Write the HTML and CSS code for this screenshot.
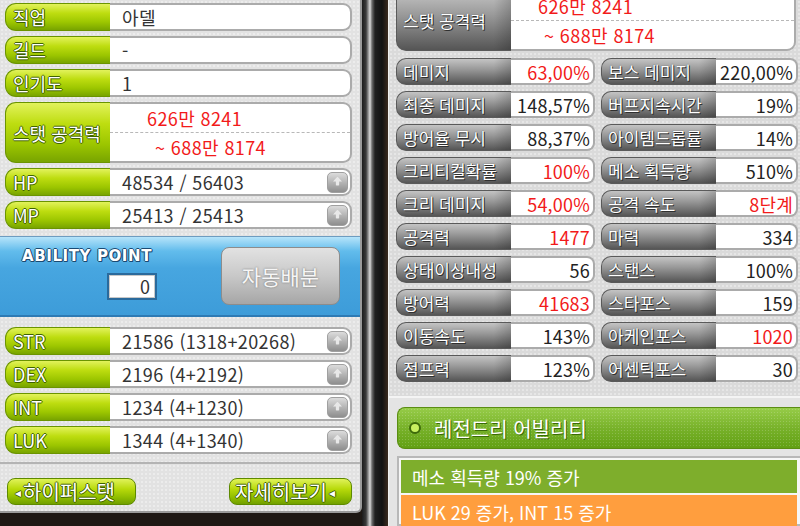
FILE: index.html
```html
<!DOCTYPE html>
<html lang="ko">
<head>
    <meta charset="UTF-8">
    <meta name="viewport" content="width=device-width, initial-scale=1.0">
    <title>캐릭터 스탯</title>
    <link rel="stylesheet" href="styles.css">
</head>
<body>
    <div class="window">
        <!-- basic stat panel -->
        <div class="left-panel">
            <div class="rows top-rows">
                <div class="row"><div class="label">직업</div><div class="value">아델</div></div>
                <div class="row"><div class="label">길드</div><div class="value">-</div></div>
                <div class="row"><div class="label">인기도</div><div class="value">1</div></div>
                <div class="row tall">
                    <div class="label">스탯 공격력</div>
                    <div class="value atk">
                        <span class="atk-line first">626만 8241</span>
                        <span class="atk-line second">~ 688만 8174</span>
                    </div>
                </div>
                <div class="row"><div class="label">HP</div><div class="value">48534 / 56403<span class="up"></span></div></div>
                <div class="row"><div class="label">MP</div><div class="value">25413 / 25413<span class="up"></span></div></div>
            </div>

            <div class="ability">
                <div class="ability-left">
                    <div class="ability-title">ABILITY POINT</div>
                    <div class="ability-input">0</div>
                </div>
                <div class="auto-btn">자동배분</div>
            </div>

            <div class="rows stat-rows">
                <div class="row"><div class="label">STR</div><div class="value">21586 (1318+20268)<span class="up"></span></div></div>
                <div class="row"><div class="label">DEX</div><div class="value">2196 (4+2192)<span class="up"></span></div></div>
                <div class="row"><div class="label">INT</div><div class="value">1234 (4+1230)<span class="up"></span></div></div>
                <div class="row"><div class="label">LUK</div><div class="value">1344 (4+1340)<span class="up"></span></div></div>
            </div>

            <div class="footer">
                <div class="green-btn"><span class="arrow">◂</span>하이퍼스탯</div>
                <div class="green-btn">자세히보기<span class="arrow">◂</span></div>
            </div>
        </div>

        <div class="strip"></div>

        <!-- detail stat panel -->
        <div class="right-panel">
            <div class="detail">
                <div class="row tall atk-row">
                    <div class="glabel">스탯 공격력</div>
                    <div class="value atk">
                        <span class="atk-line first">626만 8241</span>
                        <span class="atk-line second">~ 688만 8174</span>
                    </div>
                </div>
                <div class="grid">
                    <div class="cell"><div class="glabel">데미지</div><div class="num red">63,00%</div></div>
                    <div class="cell"><div class="glabel">보스 데미지</div><div class="num">220,00%</div></div>
                    <div class="cell"><div class="glabel">최종 데미지</div><div class="num">148,57%</div></div>
                    <div class="cell"><div class="glabel">버프지속시간</div><div class="num">19%</div></div>
                    <div class="cell"><div class="glabel">방어율 무시</div><div class="num">88,37%</div></div>
                    <div class="cell"><div class="glabel">아이템드롭률</div><div class="num">14%</div></div>
                    <div class="cell"><div class="glabel">크리티컬확률</div><div class="num red">100%</div></div>
                    <div class="cell"><div class="glabel">메소 획득량</div><div class="num">510%</div></div>
                    <div class="cell"><div class="glabel">크리 데미지</div><div class="num red">54,00%</div></div>
                    <div class="cell"><div class="glabel">공격 속도</div><div class="num red">8단계</div></div>
                    <div class="cell"><div class="glabel">공격력</div><div class="num red">1477</div></div>
                    <div class="cell"><div class="glabel">마력</div><div class="num">334</div></div>
                    <div class="cell"><div class="glabel">상태이상내성</div><div class="num">56</div></div>
                    <div class="cell"><div class="glabel">스탠스</div><div class="num">100%</div></div>
                    <div class="cell"><div class="glabel">방어력</div><div class="num red">41683</div></div>
                    <div class="cell"><div class="glabel">스타포스</div><div class="num">159</div></div>
                    <div class="cell"><div class="glabel">이동속도</div><div class="num">143%</div></div>
                    <div class="cell"><div class="glabel">아케인포스</div><div class="num red">1020</div></div>
                    <div class="cell"><div class="glabel">점프력</div><div class="num">123%</div></div>
                    <div class="cell"><div class="glabel">어센틱포스</div><div class="num">30</div></div>
                </div>
            </div>

            <div class="legend">
                <div class="legend-head"><span class="bullet"></span>레전드리 어빌리티</div>
                <div class="legend-list">
                    <div class="legend-item legendary">메소 획득량 19% 증가</div>
                    <div class="legend-item unique">LUK 29 증가, INT 15 증가</div>
                </div>
            </div>
        </div>
    </div>
</body>
</html>
```

FILE: styles.css
```css
body {
    margin: 0;
    width: 800px;
    height: 526px;
    overflow: hidden;
    background: #1e1814;
    font-family: "Noto Sans CJK KR", "Noto Sans", sans-serif;
}
.window {
    display: flex;
    height: 526px;
}

/* ---------- left panel ---------- */
.left-panel {
    width: 362px;
    height: 513px;
    flex: none;
    box-sizing: border-box;
    background-color: #e2e2e2;
    background-image: radial-gradient(#ececec 1px, transparent 1px);
    background-size: 4px 4px;
    border-right: 2px solid #9a9a9a;
    border-bottom: 2px solid #9a9a9a;
    border-bottom-right-radius: 6px;
    display: flex;
    flex-direction: column;
}
.rows {
    display: flex;
    flex-direction: column;
    gap: 5px;
    padding: 0 8px 0 5px;
}
.top-rows {
    padding-top: 3px;
}
.stat-rows {
    margin-top: 10px;
}
.row {
    display: flex;
    height: 28px;
}
.row.tall {
    height: 61px;
}
.label {
    width: 105px;
    flex: none;
    box-sizing: border-box;
    display: flex;
    align-items: center;
    padding-left: 7px;
    border: 1px solid #6b9400;
    border-right: none;
    border-radius: 11px 0 0 11px;
    background: linear-gradient(#e2f25c, #bedd10 35%, #9cc600 70%, #78a400);
    color: #fff;
    font-size: 18px;
    text-shadow: 1px 0 #3f6200, -1px 0 #3f6200, 0 1px #3f6200, 0 -1px #3f6200;
}
.value {
    flex: 1;
    display: flex;
    align-items: center;
    padding-left: 12px;
    background: #fff;
    border: 2px solid #ababab;
    border-left: none;
    border-radius: 0 9px 9px 0;
    font-size: 18px;
    letter-spacing: 0.4px;
    color: #333;
    white-space: nowrap;
}
.up {
    margin-left: auto;
    margin-right: 2px;
    width: 21px;
    height: 21px;
    flex: none;
    border-radius: 5px;
    border: 1px solid #a0a0a0;
    box-sizing: border-box;
    background: linear-gradient(#dcdcdc, #b4b4b4 50%, #8e8e8e);
    position: relative;
}
.up::after {
    content: "";
    position: absolute;
    left: 5px;
    top: 4px;
    width: 9px;
    height: 9px;
    border-radius: 50%;
    background: #e8e8e8;
    clip-path: polygon(50% 0, 100% 55%, 68% 55%, 68% 100%, 32% 100%, 32% 55%, 0 55%);
}

/* attack range cell */
.value.atk {
    flex-direction: column;
    align-items: stretch;
    padding-left: 0;
    color: #f21a1a;
}
.atk-line {
    flex: 1;
    display: flex;
    align-items: center;
}
.atk-line.first {
    border-bottom: 1px dashed #b8b8b8;
    padding-left: 37px;
}
.atk-line.second {
    padding-left: 45px;
}

/* ability point */
.ability {
    margin-top: 7px;
    height: 81px;
    box-sizing: border-box;
    border-top: 1px solid #6d9cc0;
    border-bottom: 2px solid #2d7ab4;
    background: linear-gradient(#b6e4fa, #62bcec 18%, #47a6e0 40%, #3d9cd9);
    display: flex;
    align-items: center;
    padding: 0 20px 0 22px;
}
.ability-left {
    width: 135px;
    display: flex;
    flex-direction: column;
    align-items: flex-end;
    gap: 8px;
    margin-top: -6px;
}
.ability-title {
    align-self: flex-start;
    font-family: "DejaVu Sans", sans-serif;
    font-weight: bold;
    font-size: 15px;
    letter-spacing: 0.6px;
    color: #fff;
    text-shadow: 1px 0 #1b4a72, -1px 0 #1b4a72, 0 1px #1b4a72, 0 -1px #1b4a72, 1px 1px #1b4a72;
}
.ability-input {
    width: 50px;
    height: 27px;
    box-sizing: border-box;
    background: #fff;
    border: 2px solid #2a6a9c;
    box-shadow: inset 0 0 0 1px #c8c8c8;
    text-align: right;
    padding-right: 5px;
    font-size: 18px;
    line-height: 22px;
    color: #333;
}
.auto-btn {
    margin-left: auto;
    width: 119px;
    height: 58px;
    box-sizing: border-box;
    border: 1px solid #8c8c8c;
    border-radius: 8px;
    background: linear-gradient(#e2e2e2, #c8c8c8 50%, #a6a6a6);
    display: flex;
    align-items: center;
    justify-content: center;
    font-size: 21px;
    color: #f6f6f6;
    text-shadow: 0 0 2px #6a6a6a;
}

/* footer buttons */
.footer {
    margin-top: 8px;
    border-top: 2px solid #b4b4b4;
    flex: 1;
    display: flex;
    justify-content: space-between;
    align-items: flex-start;
    padding: 14px 8px 0 7px;
}
.green-btn {
    height: 27px;
    box-sizing: border-box;
    padding: 0 5px;
    border: 1px solid #5e8a00;
    border-radius: 8px;
    background: linear-gradient(#e0f25a, #b8da0a 40%, #8ebc00 75%, #72a000);
    display: flex;
    align-items: center;
    font-size: 20px;
    color: #fff;
    text-shadow: 1px 0 #3f6200, -1px 0 #3f6200, 0 1px #3f6200, 0 -1px #3f6200;
}
.green-btn:first-child {
    width: 129px;
}
.green-btn:last-child {
    width: 123px;
}
.arrow {
    font-size: 12px;
    margin: 0 2px;
}

/* middle strip */
.strip {
    width: 26px;
    flex: none;
    background: linear-gradient(90deg, #1b1b1b 0, #3a3a3a 4px, #8a8a8a 6px, #dcdcdc 8px, #6c6c6c 10px, #202020 13px, #121212 20px, #3a2a1e 26px);
}

/* ---------- right panel ---------- */
.right-panel {
    flex: 1;
    display: flex;
    flex-direction: column;
    background-color: #dadada;
    background-image: radial-gradient(#e6e6e6 1px, transparent 1px);
    background-size: 4px 4px;
    border-left: 1px solid #f0f0f0;
}
.detail {
    padding: 0 3px 0 7px;
    height: 397px;
    box-sizing: border-box;
}
.atk-row {
    margin-top: -10px;
    margin-right: 2px;
    height: 62px;
}
.glabel {
    width: 115px;
    flex: none;
    box-sizing: border-box;
    display: flex;
    align-items: center;
    padding-left: 6px;
    border: 1px solid #5a5a5a;
    border-right: none;
    border-radius: 10px 0 0 10px;
    background: linear-gradient(90deg, rgba(0,0,0,0) 85%, rgba(0,0,0,0.18)), linear-gradient(#c4c4c4, #9a9a9a 40%, #727272 75%, #555);
    color: #fff;
    font-size: 17px;
    white-space: nowrap;
    text-shadow: 1px 1px #303030, 0 0 1px #303030;
}
.atk-row .atk-line.first {
    padding-left: 27px;
}
.atk-row .atk-line.second {
    padding-left: 33px;
}
.grid {
    margin-top: 7px;
    display: grid;
    grid-template-columns: 199px 197px;
    column-gap: 6px;
    row-gap: 6px;
}
.cell {
    display: flex;
    height: 27px;
}
.num {
    flex: 1;
    display: flex;
    align-items: center;
    justify-content: flex-end;
    padding-right: 3px;
    background: #fff;
    border: 2px solid #ababab;
    border-left: none;
    border-radius: 0 8px 8px 0;
    font-size: 18px;
    letter-spacing: 0.2px;
    color: #222;
    white-space: nowrap;
}
.num.red {
    color: #f21a1a;
}

/* legendary ability */
.legend {
    flex: 1;
    border-top: 2px solid #f4f4f4;
    background-color: #e4e4e4;
    padding: 9px 0 0 8px;
}
.legend-head {
    height: 42px;
    box-sizing: border-box;
    border: 1px solid #5b8d14;
    border-right: none;
    border-radius: 8px 0 0 8px;
    background-color: #76b026;
    background-image: radial-gradient(rgba(255,255,255,0.18) 1px, transparent 1px), linear-gradient(#96cc48, #78b22a 50%, #62a014);
    background-size: 3px 3px, 100% 100%;
    display: flex;
    align-items: center;
    padding-left: 11px;
    font-size: 20px;
    color: #fff;
    text-shadow: 1px 1px #3a6a08;
}
.bullet {
    width: 8px;
    height: 8px;
    border-radius: 50%;
    border: 2px solid #3d6a0a;
    background: #c8f060;
    margin-right: 13px;
}
.legend-list {
    margin-top: 7px;
    height: 70px;
    box-sizing: border-box;
    border: 2px solid #b8b8b8;
    border-right: none;
    padding: 2px 4px 0 2px;
    background: #f6f6f6;
    display: flex;
    flex-direction: column;
    gap: 2px;
}
.legend-item {
    height: 33px;
    flex: none;
    display: flex;
    align-items: center;
    padding-left: 11px;
    font-size: 18px;
    color: #fff;
}
.legendary {
    background: #7eae2c;
}
.unique {
    background: #ff9e3e;
}
```
